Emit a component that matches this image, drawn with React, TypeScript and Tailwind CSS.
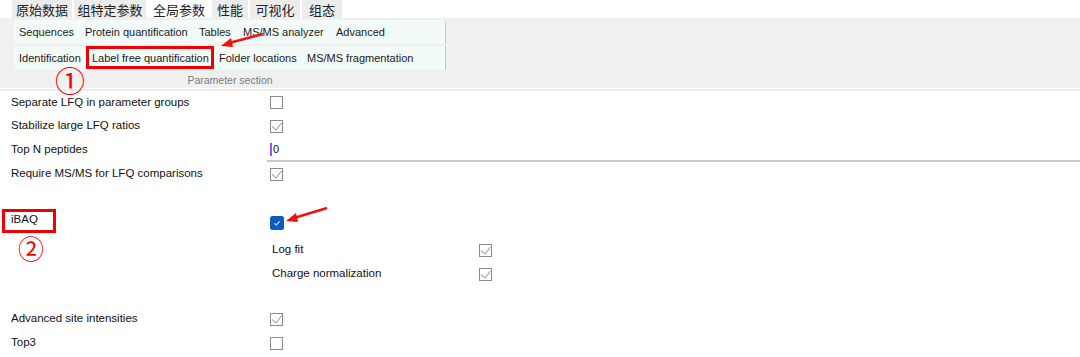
import React from 'react';

const topTabs = [
    { name: '原始数据', w: 'w-[60px]' },
    { name: '组特定参数', w: 'w-[72px]' },
    { name: '全局参数', w: 'w-[62px]', active: true },
    { name: '性能', w: 'w-[36px]' },
    { name: '可视化', w: 'w-[50px]' },
    { name: '组态', w: 'w-[40px]' },
];

const subRow1 = [
    { name: 'Sequences', w: 'w-[66px]' },
    { name: 'Protein quantification', w: 'w-[114px]' },
    { name: 'Tables', w: 'w-[44px]' },
    { name: 'MS/MS analyzer', w: 'w-[93px]' },
    { name: 'Advanced', w: 'w-[90px]' },
];

const subRow2 = [
    { name: 'Identification', w: 'w-[73px]' },
    { name: 'Label free quantification', w: 'w-[127px]' },
    { name: 'Folder locations', w: 'w-[88px]' },
    { name: 'MS/MS fragmentation', w: 'w-[120px]' },
];

function GrayCheck({ checked }: { checked: boolean }) {
    return (
        <svg width="13" height="13" viewBox="0 0 13 13" className="block">
            <rect x="0.5" y="0.5" width="12" height="12" fill="#fff" stroke="#8a8a8a" />
            {checked && <path d="M2 6.5 L6 10 L11.5 3" fill="none" stroke="#8a8a8a" strokeWidth="1" />}
        </svg>
    );
}

function BlueCheck() {
    return (
        <svg width="14" height="14" viewBox="0 0 14 14" className="block">
            <rect x="0" y="0" width="14" height="14" rx="2.5" fill="#0b5cc0" />
            <path d="M4.5 7.3 L6.3 9 L9.6 5.4" fill="none" stroke="#dbe8fb" strokeWidth="1.1" />
        </svg>
    );
}

function Row({ label, children, h = 'h-[24px]' }: { label?: string; children?: React.ReactNode; h?: string }) {
    return (
        <div className={`flex items-center ${h}`}>
            <div className="w-[270px] pl-[11px] text-[11.5px] text-[#111]">{label}</div>
            <div className="flex-1 flex items-center">{children}</div>
        </div>
    );
}

export default function App() {
    return (
        <div className="relative w-[1080px] h-[357px] overflow-hidden bg-white" style={{ fontFamily: '"Liberation Sans", Arial, "Noto Sans CJK SC", sans-serif' }}>
            {/* top tabs */}
            <div className="flex h-[18px] gap-[2px] pl-[12px]">
                {topTabs.map((t) => (
                    <div
                        key={t.name}
                        className={`${t.w} flex items-center justify-center text-[13px] leading-none text-[#222] ${t.active ? 'bg-white' : 'bg-[#ececec]'}`}
                        style={{ fontFamily: '"Noto Sans CJK SC", sans-serif' }}
                    >
                        {t.name}
                    </div>
                ))}
            </div>

            {/* parameter section header */}
            <div className="bg-[#f0f0f0] h-[70px] pt-[2px]">
                <div className="ml-[14px] w-[432px] flex flex-col gap-[2px]">
                    <div className="flex h-[24px] items-center pl-[5px] bg-[#f3fbf8] border-r border-[#c4c4c4] rounded-tr-[3px]">
                        {subRow1.map((s) => (
                            <span key={s.name} className={`${s.w} shrink-0 text-[11px] text-[#1a1a1a]`}>{s.name}</span>
                        ))}
                    </div>
                    <div className="flex h-[24px] items-center pl-[5px] bg-[#f3fbf8] border-r border-[#c4c4c4]">
                        {subRow2.map((s) => (
                            <span key={s.name} className={`${s.w} shrink-0 text-[11px] text-[#1a1a1a]`}>{s.name}</span>
                        ))}
                    </div>
                </div>
                <div className="w-[460px] text-center text-[10.5px] text-[#7a7a7a] mt-[3px]">Parameter section</div>
            </div>
            <div className="h-[1px] bg-white" />
            <div className="h-[2px] bg-[#ececec]" />

            {/* parameters */}
            <div className="flex flex-col">
                <Row label="Separate LFQ in parameter groups" h="h-[23px]">
                    <GrayCheck checked={false} />
                </Row>
                <Row label="Stabilize large LFQ ratios">
                    <GrayCheck checked />
                </Row>
                <Row label="Top N peptides">
                    <div className="flex-1 flex flex-col">
                        <div className="flex items-center h-[22px]">
                            <div className="w-[2px] h-[13px] bg-[#a64df0]" />
                            <span className="text-[11px] text-[#111] ml-[1px]">0</span>
                        </div>
                        <div className="h-[2px] bg-[#cfcac0] -ml-[3px]" />
                    </div>
                </Row>
                <Row label="Require MS/MS for LFQ comparisons">
                    <GrayCheck checked />
                </Row>
                <div className="h-[22px]" />
                <Row label="iBAQ">
                    <div className="mt-[6px]">
                        <BlueCheck />
                    </div>
                </Row>
                <div className="h-[6px]" />
                <div className="flex flex-col pl-[272px]">
                    <div className="flex items-center h-[24px]">
                        <div className="w-[207px] text-[11.5px] text-[#111]">Log fit</div>
                        <GrayCheck checked />
                    </div>
                    <div className="flex items-center h-[24px]">
                        <div className="w-[207px] text-[11.5px] text-[#111]">Charge normalization</div>
                        <GrayCheck checked />
                    </div>
                </div>
                <div className="h-[21px]" />
                <Row label="Advanced site intensities">
                    <GrayCheck checked />
                </Row>
                <Row label="Top3">
                    <GrayCheck checked={false} />
                </Row>
            </div>

            {/* annotations */}
            <div className="absolute left-[86px] top-[46px] w-[128px] h-[23px] border-[3px] border-[#f00000]" />
            <div className="absolute left-[2px] top-[209px] w-[54px] h-[24px] border-[3px] border-[#f00000]" />
            <div className="absolute left-[55px] top-[66px] h-[27px] text-[30px] leading-[27px] text-[#f00000]" style={{ fontFamily: '"Noto Sans CJK SC", sans-serif' }}>①</div>
            <div className="absolute left-[18px] top-[236px] h-[24px] text-[26px] leading-[24px] text-[#f00000]" style={{ fontFamily: '"Noto Sans CJK SC", sans-serif' }}>②</div>
            <svg className="absolute left-0 top-0" width="1080" height="357">
                <line x1="263" y1="34" x2="229" y2="43" stroke="#ee1111" strokeWidth="2.5" />
                <polygon points="221,46 231,38 233,47" fill="#ee1111" />
                <line x1="327" y1="208" x2="294" y2="218" stroke="#ee1111" strokeWidth="2.5" />
                <polygon points="286,221 296,213 298,222" fill="#ee1111" />
            </svg>
        </div>
    );
}
